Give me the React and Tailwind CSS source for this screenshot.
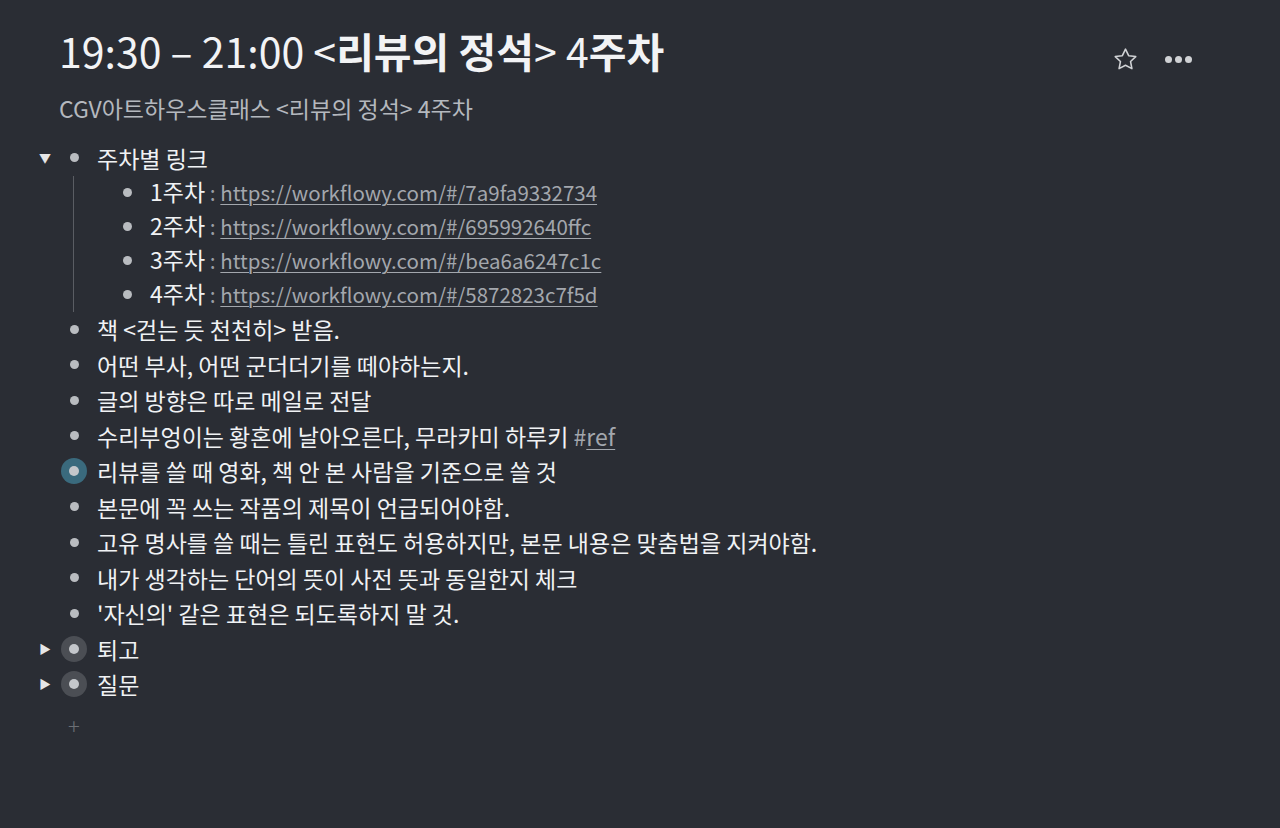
import React from "react";

const font = { fontFamily: '"Noto Sans CJK KR", "Noto Sans", sans-serif' };

function Bullet({ variant }) {
  if (variant === "collapsed") {
    return (
      <span className="flex h-[26px] w-[26px] items-center justify-center rounded-full bg-[#4b4e54]">
        <span className="h-[10px] w-[10px] rounded-full bg-[#c4c7cb]" />
      </span>
    );
  }
  if (variant === "active") {
    return (
      <span className="flex h-[26px] w-[26px] items-center justify-center rounded-full bg-[#3a6a7d]">
        <span className="h-[10px] w-[10px] rounded-full bg-[#c4c7cb]" />
      </span>
    );
  }
  return <span className="h-[9px] w-[9px] rounded-full bg-[#b9bcc0]" />;
}

function Row({ children, bullet, arrow }) {
  return (
    <div className="flex h-[35.5px] items-center">
      <div className="flex w-[30px] items-center justify-center">
        {arrow === "down" && <span className="text-[12px] text-[#e6e6e6]">▼</span>}
        {arrow === "right" && <span className="text-[12px] text-[#e6e6e6]">▶</span>}
      </div>
      <div className="flex w-[28px] items-center justify-center">
        <Bullet variant={bullet} />
      </div>
      <div className="whitespace-nowrap pl-[9px] text-[23px] leading-[32px] text-[#f0f2f4]">{children}</div>
    </div>
  );
}

const links = [
  ["1주차", "https://workflowy.com/#/7a9fa9332734"],
  ["2주차", "https://workflowy.com/#/695992640ffc"],
  ["3주차", "https://workflowy.com/#/bea6a6247c1c"],
  ["4주차", "https://workflowy.com/#/5872823c7f5d"],
];

const items = [
  "책 <걷는 듯 천천히> 받음.",
  "어떤 부사, 어떤 군더더기를 떼야하는지.",
  "글의 방향은 따로 메일로 전달",
];

const items2 = [
  "본문에 꼭 쓰는 작품의 제목이 언급되어야함.",
  "고유 명사를 쓸 때는 틀린 표현도 허용하지만, 본문 내용은 맞춤법을 지켜야함.",
  "내가 생각하는 단어의 뜻이 사전 뜻과 동일한지 체크",
  "'자신의' 같은 표현은 되도록하지 말 것.",
];

export default function App() {
  return (
    <div className="min-h-[828px] w-full bg-[#2a2d34] text-[#eceef0]" style={font}>
      <div className="flex items-start justify-between pl-[59px] pr-[88px] pt-[25px]">
        <h1 className="whitespace-nowrap text-[41px] font-normal leading-[50px] text-[#f2f3f5]">
          19:30 – 21:00 &lt;<span className="font-bold">리뷰의 정석</span>&gt; 4<span className="font-bold">주차</span>
        </h1>
        <div className="mt-[21px] flex items-center gap-[26px]">
          <svg width="27" height="27" viewBox="0 0 24 24" fill="none" stroke="#d0d2d5" strokeWidth="1.4" strokeLinejoin="round">
            <path d="M12 2.8l2.8 5.8 6.3.8-4.6 4.4 1.2 6.3L12 17.1l-5.7 3 1.2-6.3-4.6-4.4 6.3-.8z" />
          </svg>
          <div className="flex gap-[3px]">
            <span className="h-[7px] w-[7px] rounded-full bg-[#d0d2d5]" />
            <span className="h-[7px] w-[7px] rounded-full bg-[#d0d2d5]" />
            <span className="h-[7px] w-[7px] rounded-full bg-[#d0d2d5]" />
          </div>
        </div>
      </div>
      <div className="mt-[17px] whitespace-nowrap pl-[59px] text-[23px] leading-[32px] text-[#b4b8be]">
        CGV아트하우스클래스 &lt;리뷰의 정석&gt; 4주차
      </div>

      <div className="mt-[16px] pl-[30px]">
        <Row arrow="down">주차별 링크</Row>
        <div className="ml-[43px] border-l border-[#5a5d63] pl-[39px]">
          {links.map(([w, url]) => (
            <div key={w} className="flex h-[34px] items-center">
              <div className="flex w-[28px] items-center justify-center">
                <Bullet />
              </div>
              <div className="whitespace-nowrap pl-[9px] leading-[32px]">
                <span className="text-[23px] text-[#f0f2f4]">{w}</span>
                <span className="text-[21px] text-[#9a9ea4]"> : </span>
                <span className="text-[20.5px] text-[#a3a7ad] underline decoration-1 underline-offset-[3px]">{url}</span>
              </div>
            </div>
          ))}
        </div>
        {items.map((t) => (
          <Row key={t}>{t}</Row>
        ))}
        <Row>
          수리부엉이는 황혼에 날아오른다, 무라카미 하루키{" "}
          <span className="text-[#a3a7ad]">
            #<span className="underline decoration-1 underline-offset-[3px]">ref</span>
          </span>
        </Row>
        <Row bullet="active">리뷰를 쓸 때 영화, 책 안 본 사람을 기준으로 쓸 것</Row>
        {items2.map((t) => (
          <Row key={t}>{t}</Row>
        ))}
        <Row arrow="right" bullet="collapsed">퇴고</Row>
        <Row arrow="right" bullet="collapsed">질문</Row>
        <div className="flex h-[46px] items-center">
          <div className="w-[30px]" />
          <div className="flex w-[28px] items-center justify-center text-[22px] font-light text-[#6b6f75]">+</div>
        </div>
      </div>
    </div>
  );
}
